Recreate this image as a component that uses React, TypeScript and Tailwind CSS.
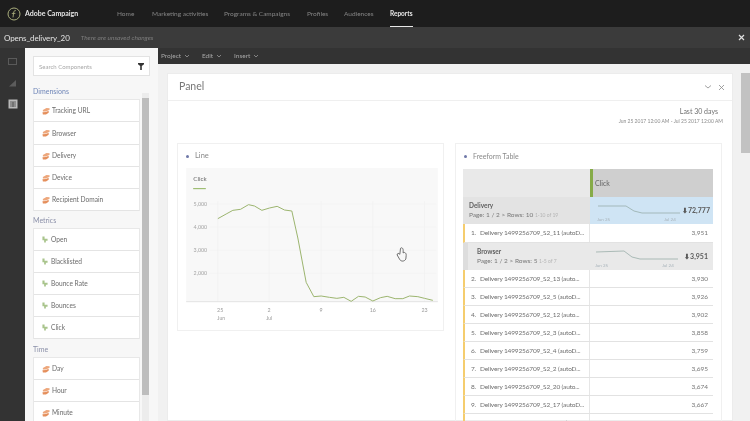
// Adobe Campaign report workspace: nav, component rail, line chart + freeform table.
const font = "font-['Lato','Liberation_Sans',sans-serif]";

const navItems = ['Home', 'Marketing activities', 'Programs & Campaigns', 'Profiles', 'Audiences'];
const navGaps = ['w-[35px]', 'w-[72px]', 'w-[83px]', 'w-[37px]', 'w-[46px]'];

const tableRows: [string, string, string][] = [
  ['2.', 'Delivery 1499256709_S2_13 (auto...', '3,930'],
  ['3.', 'Delivery 1499256709_S2_5 (autoD...', '3,926'],
  ['4.', 'Delivery 1499256709_S2_12 (auto...', '3,902'],
  ['5.', 'Delivery 1499256709_S2_3 (autoD...', '3,858'],
  ['6.', 'Delivery 1499256709_S2_4 (autoD...', '3,759'],
  ['7.', 'Delivery 1499256709_S2_2 (autoD...', '3,695'],
  ['8.', 'Delivery 1499256709_S2_20 (auto...', '3,674'],
  ['9.', 'Delivery 1499256709_S2_17 (autoD...', '3,667'],
  ['10.', 'Delivery 1499256709_S2_19 (auto...', '3,645'],
];

const linePoints =
  '140,237 165,223 185,212 208,209 232,195 250,199 272,212 295,205 318,200 340,211 362,214 380,295 405,428 428,471 450,469 475,473 497,476 518,473 540,485 562,470 582,472 605,484 628,474 648,470 672,477 695,477 715,469 740,471 760,476 785,482';

function DimensionIcon() {
  return (
    <svg width="8" height="8" viewBox="0 0 9 9" className="shrink-0">
      <path d="M1 3.5 L5 1 L8.5 1.5 L8.5 3 L4.5 5 L1 5 Z" fill="#eda77c" />
      <path d="M0.5 6 L4.5 5.6 L7.5 4.2 L7.5 6.5 L4.5 8.5 L1 8.5 Z" fill="#e58f5c" />
    </svg>
  );
}

function MetricIcon() {
  return (
    <svg width="6" height="7" viewBox="0 0 7 8" className="shrink-0">
      <path d="M0.5 0.5 H3 V3 H6.5 V5.5 H4.5 V7.5 H2.5 V5 H0.5 Z" fill="#a9c48c" />
    </svg>
  );
}

function ComponentRow({ label, metric, h }: { label: string; metric?: boolean; h: string }) {
  return (
    <div className={`${h} flex items-center border-b border-[#e4e4e4] pl-[8px] ${metric ? 'gap-[3px]' : 'gap-[2px]'} bg-white`}>
      {metric ? <MetricIcon /> : <DimensionIcon />}
      <span className="text-[6.6px] leading-none text-[#6b6b6b]">{label}</span>
    </div>
  );
}

function Section({ title, children, className }: { title: string; children: React.ReactNode; className: string }) {
  return (
    <div className={className}>
      <div className={`text-[7px] leading-none h-[9px] ${title === 'Dimensions' ? 'text-[#6f86b8]' : 'text-[#8a8fa8]'}`}>{title}</div>
      <div className="mt-[2px] w-[107px] border border-[#e8e8e8] border-b-0">{children}</div>
    </div>
  );
}

function Chevron() {
  return (
    <svg width="6" height="4" viewBox="0 0 6 4" className="ml-[3px]">
      <path d="M1 1 L3 3 L5 1" fill="none" stroke="#a6a6a6" strokeWidth="0.7" />
    </svg>
  );
}

function Spark({ points }: { points: string }) {
  return (
    <svg width="88" height="22" viewBox="0 0 88 22" className="shrink-0">
      <polyline points={points} fill="none" stroke="#8fa6a0" strokeWidth="0.7" />
      <text x="3" y="21" fontSize="4.5" fill="#a9b4bb">Jun 25</text>
      <text x="70" y="21" fontSize="4.5" fill="#a9b4bb">Jul 24</text>
    </svg>
  );
}

export default function App() {
  return (
    <div className={`${font} w-[750px] h-[421px] overflow-hidden flex flex-col bg-[#f1f1f1] blur-[0.3px]`}>
      {/* top nav */}
      <div className="h-[27px] shrink-0 bg-[#1d1d1d] flex items-center pl-[7px] relative">
        <svg width="14" height="14" viewBox="0 0 14 14" className="shrink-0">
          <circle cx="7" cy="7" r="6" fill="none" stroke="#a9ad7c" strokeWidth="1" />
          <path d="M8.8 3.6 C7 3.4 6.8 4.6 6.6 6 L6 10.4 M4.8 6.4 H8.4" fill="none" stroke="#a9ad7c" strokeWidth="0.9" />
        </svg>
        <span className="ml-[4px] w-[92px] text-[7px] font-bold text-[#e4e4e4] whitespace-nowrap">Adobe Campaign</span>
        {navItems.map((n, i) => (
          <span key={n} className={`${navGaps[i]} shrink-0 text-[6.5px] text-[#858585] whitespace-nowrap`}>{n}</span>
        ))}
        <span className="relative h-full flex items-center text-[6.5px] font-bold text-[#e8e8e8]">
          Reports
          <span className="absolute left-0 right-0 bottom-0 h-[1px] bg-[#e8e8e8]" />
        </span>
      </div>
      {/* title bar */}
      <div className="h-[21px] shrink-0 bg-[#3b3b3b] flex items-center pl-[4px] pr-[5px]">
        <span className="text-[8px] tracking-[-0.1px] text-[#e2e2e2]">Opens_delivery_20</span>
        <span className="ml-[11px] text-[6.5px] italic text-[#7d7d7d]">There are unsaved changes</span>
        <svg width="7" height="7" viewBox="0 0 7 7" className="ml-auto">
          <path d="M1 1 L6 6 M6 1 L1 6" stroke="#e0e0e0" strokeWidth="1.2" />
        </svg>
      </div>
      <div className="flex-1 flex min-h-0">
        {/* icon rail */}
        <div className="w-[25px] shrink-0 bg-[#333333] flex flex-col items-center pt-[9px] gap-[12px]">
          <svg width="9" height="9" viewBox="0 0 9 9"><rect x="0.5" y="1.5" width="8" height="6" fill="none" stroke="#5a5a5a" /></svg>
          <svg width="9" height="9" viewBox="0 0 9 9"><path d="M1 8.5 L8 2 V8.5 Z" fill="#5c5c5c" /></svg>
          <svg width="10" height="10" viewBox="0 0 10 10">
            <rect x="0.5" y="0.5" width="9" height="9" fill="#b9b9b9" />
            <path d="M2 3 H8 M2 5 H8 M2 7 H8 M5 3 V8" stroke="#4a4a4a" strokeWidth="0.8" />
          </svg>
        </div>
        {/* components sidebar */}
        <div className="w-[133px] shrink-0 bg-[#f7f7f7] flex flex-col pl-[8px] pt-[8px] relative">
          <div className="w-[117px] h-[20px] shrink-0 bg-white border border-[#e3e3e3] flex items-center pl-[5px] pr-[5px]">
            <span className="text-[6px] text-[#a8a8a8]">Search Components</span>
            <svg width="6" height="7" viewBox="0 0 6 7" className="ml-auto">
              <path d="M0 0 H6 V1.2 L3.8 3 V7 H2.2 V3 L0 1.2 Z" fill="#333333" />
            </svg>
          </div>
          <Section title="Dimensions" className="mt-[12px]">
            <ComponentRow label="Tracking URL" h="h-[22px]" />
            <ComponentRow label="Browser" h="h-[23px]" />
            <ComponentRow label="Delivery" h="h-[22px]" />
            <ComponentRow label="Device" h="h-[22px]" />
            <ComponentRow label="Recipient Domain" h="h-[22px]" />
          </Section>
          <Section title="Metrics" className="mt-[6px]">
            <ComponentRow label="Open" metric h="h-[22px]" />
            <ComponentRow label="Blacklisted" metric h="h-[22px]" />
            <ComponentRow label="Bounce Rate" metric h="h-[22px]" />
            <ComponentRow label="Bounces" metric h="h-[22px]" />
            <ComponentRow label="Click" metric h="h-[22px]" />
          </Section>
          <Section title="Time" className="mt-[7px]">
            <ComponentRow label="Day" h="h-[22px]" />
            <ComponentRow label="Hour" h="h-[22px]" />
            <ComponentRow label="Minute" h="h-[22px]" />
          </Section>
          {/* sidebar scrollbar */}
          <div className="absolute left-[117px] top-[45px] bottom-0 w-[7px] bg-[#ececec]">
            <div className="mt-[5px] h-[297px] bg-[#bdbdbd]" />
          </div>
        </div>
        {/* workspace */}
        <div className="flex-1 flex flex-col min-w-0">
          <div className="h-[16px] shrink-0 bg-[#333333] flex items-center pl-[3px] text-[6.5px] text-[#a6a6a6]">
            <span className="w-[41px] flex items-center">Project<Chevron /></span>
            <span className="w-[32px] flex items-center">Edit<Chevron /></span>
            <span className="flex items-center">Insert<Chevron /></span>
          </div>
          <div className="flex-1 flex min-h-0 relative pl-[9px] pt-[9px]">
            {/* panel */}
            <div className="w-[566px] bg-white flex flex-col border border-[#ececec]">
              <div className="h-[27px] shrink-0 flex items-center pl-[11px] pr-[7px] border-b border-[#efefef]">
                <span className="text-[10.5px] text-[#777777]">Panel</span>
                <svg width="8" height="6" viewBox="0 0 8 6" className="ml-auto"><path d="M1 1.5 L4 4 L7 1.5" fill="none" stroke="#8a8a8a" strokeWidth="0.8" /></svg>
                <svg width="7" height="7" viewBox="0 0 7 7" className="ml-[6px]"><path d="M1 1 L6 6 M6 1 L1 6" stroke="#8a8a8a" strokeWidth="0.8" /></svg>
              </div>
              <div className="h-[42px] shrink-0 flex flex-col items-end pt-[5px] pr-[9px]">
                <span className="text-[7px] leading-[11px] text-[#707070] pr-[5px]">Last 30 days</span>
                <span className="text-[5px] leading-[9px] text-[#8c8c8c]">Jun 25 2017 12:00 AM - Jul 25 2017 12:00 AM</span>
              </div>
              <div className="flex pl-[9px] gap-[11px]">
                {/* line card */}
                <div className="w-[267px] h-[188px] shrink-0 border border-[#f0f0f0] flex flex-col pl-[8px] pr-[7px]">
                  <div className="h-[24px] shrink-0 flex items-center gap-[6px]">
                    <span className="w-[3px] h-[3px] rounded-full bg-[#6f78a8]" />
                    <span className="text-[7.5px] text-[#8a8a8a]">Line</span>
                  </div>
                  <svg width="252" height="159" viewBox="45 85 755 477" className="shrink-0">
                    <rect x="45" y="85" width="755" height="400" fill="#f8f8f8" />
                    <text x="66" y="123" fontSize="19" fill="#6b6b6b">Click</text>
                    <line x1="66" y1="147" x2="104" y2="147" stroke="#8fb35c" strokeWidth="3" />
                    {[140, 294, 450, 605, 760].map((x) => (
                      <line key={x} x1={x} y1="185" x2={x} y2="485" stroke="#efefef" strokeWidth="1.5" />
                    ))}
                    {[193, 262, 332, 401].map((y) => (
                      <line key={y} x1="115" y1={y} x2="795" y2={y} stroke="#f1f1f1" strokeWidth="1.5" />
                    ))}
                    {[['5,000', 193], ['4,000', 262], ['3,000', 332], ['2,000', 401]].map(([t, y]) => (
                      <text key={t} x="108" y={Number(y) + 5} textAnchor="end" fontSize="16" fill="#a5a5a5">{t}</text>
                    ))}
                    <line x1="45" y1="486" x2="800" y2="486" stroke="#d6d6d6" strokeWidth="2" />
                    <polyline points={linePoints} fill="none" stroke="#9cb56f" strokeWidth="3" />
                    {[['25', 147], ['2', 294], ['9', 450], ['16', 605], ['23', 760]].map(([t, x]) => (
                      <text key={t} x={x} y="517" textAnchor="middle" fontSize="16" fill="#9a9a9a">{t}</text>
                    ))}
                    <text x="150" y="542" textAnchor="middle" fontSize="15" fill="#9a9a9a">Jun</text>
                    <text x="294" y="542" textAnchor="middle" fontSize="15" fill="#9a9a9a">Jul</text>
                    {/* hand cursor */}
                    <path d="M688 326 C692 322 696 326 696 332 V340 C700 336 706 340 705 348 L704 358 C700 366 690 366 686 360 L678 346 C677 341 683 339 686 344 Z" fill="#f7f7f7" stroke="#555555" strokeWidth="2.5" />
                  </svg>
                </div>
                {/* freeform card */}
                <div className="w-[267px] shrink-0 border border-[#f0f0f0] flex flex-col pl-[7px] pr-[8px]">
                  <div className="h-[25px] shrink-0 flex items-center gap-[6px] pl-[1px]">
                    <span className="w-[3px] h-[3px] rounded-full bg-[#6f78a8]" />
                    <span className="text-[7px] text-[#8a8a8a]">Freeform Table</span>
                  </div>
                  <div className="flex h-[28px]">
                    <div className="w-[127px] bg-[#e9e9e9]" />
                    <div className="flex-1 bg-[#cfcfcf] border-l-[3px] border-[#86ab48] pl-[2px] flex items-center text-[7px] text-[#666666]">Click</div>
                  </div>
                  <div className="flex h-[27px]">
                    <div className="w-[127px] bg-[#e3e3e3] pl-[6px] flex flex-col justify-center">
                      <span className="text-[6.5px] leading-[9px] font-bold text-[#5f5f5f]">Delivery</span>
                      <span className="text-[6.5px] leading-[9px] text-[#777777] whitespace-nowrap">Page: 1 / 2 &gt; Rows: 10 <span className="text-[5px] text-[#b5b5b5]">1-10 of 19</span></span>
                    </div>
                    <div className="flex-1 bg-[#cfe4f4] flex items-center pl-[4px] overflow-hidden">
                      <Spark points="4,6 32,6 40,11 48,13 86,13" />
                      <span className="text-[7px] font-bold text-[#5a5a5a] whitespace-nowrap">⬇72,777</span>
                    </div>
                  </div>
                  <div className="flex h-[19px] border-l-2 border-l-[#f5cd6e] border-b border-b-[#e2e2e2]">
                    <div className="w-[125px] pl-[6px] flex items-center border-r border-[#e6e6e6] text-[6.5px] tracking-[-0.15px] text-[#6f6f6f] whitespace-nowrap gap-[4px]"><span>1.</span><span>Delivery 1499256709_S2_11 (autoD...</span></div>
                    <div className="flex-1 flex items-center justify-end pr-[5px] text-[6.5px] text-[#777777]">3,951</div>
                  </div>
                  <div className="flex h-[27px] bg-[#e9e9e9]">
                    <div className="w-[127px] pl-[9px] flex flex-col justify-center border-l-[5px] border-[#dddddd]">
                      <span className="text-[6.5px] leading-[9px] font-bold text-[#5f5f5f]">Browser</span>
                      <span className="text-[6.5px] leading-[9px] text-[#777777] whitespace-nowrap">Page: 1 / 2 &gt; Rows: 5 <span className="text-[5px] text-[#b5b5b5]">1-5 of 7</span></span>
                    </div>
                    <div className="flex-1 flex items-center justify-between pl-[2px] pr-[5px] overflow-hidden">
                      <Spark points="4,6 32,5 40,11 48,13 86,13" />
                      <span className="text-[7px] font-bold text-[#5a5a5a] whitespace-nowrap">⬇3,951</span>
                    </div>
                  </div>
                  {tableRows.map(([n, name, value]) => (
                    <div key={n} className="flex h-[18px] shrink-0 border-l-2 border-l-[#f5cd6e] border-b border-b-[#e2e2e2]">
                      <div className="w-[125px] pl-[6px] flex items-center border-r border-[#e6e6e6] text-[6.5px] tracking-[-0.15px] text-[#6f6f6f] whitespace-nowrap gap-[4px]"><span>{n}</span><span>{name}</span></div>
                      <div className="flex-1 flex items-center justify-end pr-[5px] text-[6.5px] text-[#777777]">{value}</div>
                    </div>
                  ))}
                </div>
              </div>
            </div>
            {/* page scrollbar */}
            <div className="absolute right-0 top-0 bottom-0 w-[9px] bg-[#f1f1f1]">
              <div className="mt-[9px] h-[80px] bg-[#c2c2c2]" />
            </div>
          </div>
        </div>
      </div>
    </div>
  );
}
